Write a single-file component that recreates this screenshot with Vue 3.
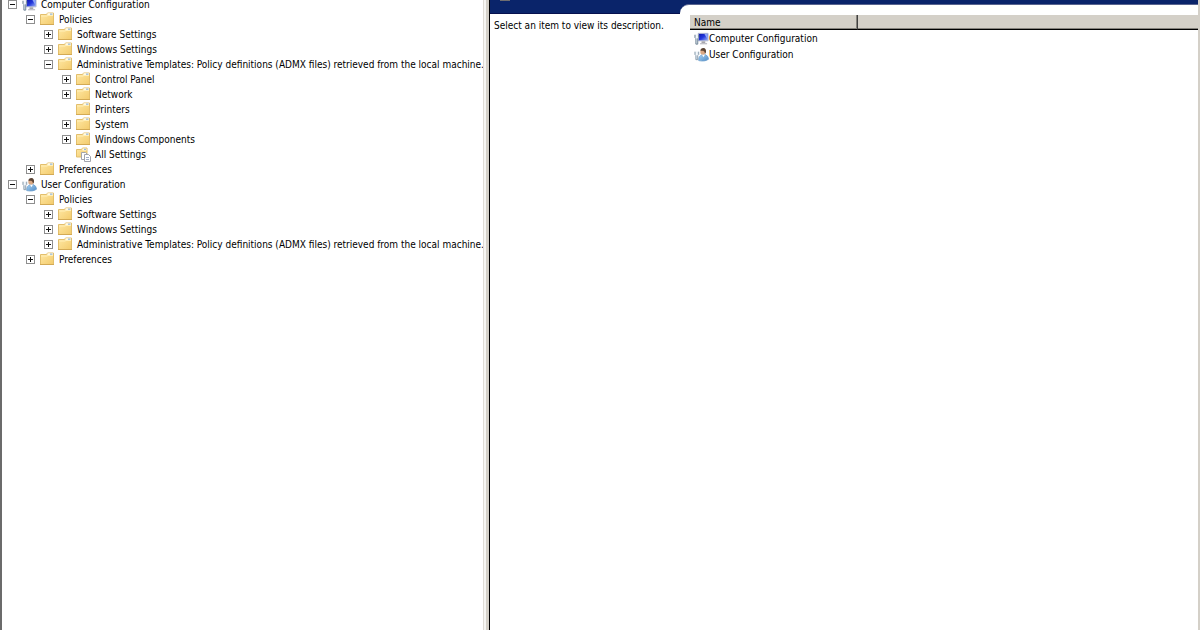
<script setup>
import { ref, computed } from 'vue'

const admx = 'Administrative Templates: Policy definitions (ADMX files) retrieved from the local machine.'

const nodes = ref([
  { label: 'Computer Configuration', depth: 0, icon: 'computer', open: true },
  { label: 'Policies', depth: 1, icon: 'folder', open: true },
  { label: 'Software Settings', depth: 2, icon: 'folder', open: false },
  { label: 'Windows Settings', depth: 2, icon: 'folder', open: false },
  { label: admx, depth: 2, icon: 'folder', open: true },
  { label: 'Control Panel', depth: 3, icon: 'folder', open: false },
  { label: 'Network', depth: 3, icon: 'folder', open: false },
  { label: 'Printers', depth: 3, icon: 'folder', leaf: true },
  { label: 'System', depth: 3, icon: 'folder', open: false },
  { label: 'Windows Components', depth: 3, icon: 'folder', open: false },
  { label: 'All Settings', depth: 3, icon: 'settings', leaf: true },
  { label: 'Preferences', depth: 1, icon: 'folder', open: false },
  { label: 'User Configuration', depth: 0, icon: 'user', open: true },
  { label: 'Policies', depth: 1, icon: 'folder', open: true },
  { label: 'Software Settings', depth: 2, icon: 'folder', open: false },
  { label: 'Windows Settings', depth: 2, icon: 'folder', open: false },
  { label: admx, depth: 2, icon: 'folder', open: false },
  { label: 'Preferences', depth: 1, icon: 'folder', open: false },
])

const visible = computed(() => {
  const out = []
  let limit = Infinity
  for (const n of nodes.value) {
    if (n.depth > limit) continue
    limit = n.leaf || n.open ? Infinity : n.depth
    out.push(n)
  }
  return out
})

const items = [
  { label: 'Computer Configuration', icon: 'computer' },
  { label: 'User Configuration', icon: 'user' },
]
</script>

<template>
  <svg class="defs" aria-hidden="true">
    <defs>
      <linearGradient id="fold" x1="0" y1="0" x2="1" y2="1">
        <stop offset="0" stop-color="#ffe8a4" />
        <stop offset="1" stop-color="#f3cb6c" />
      </linearGradient>
      <linearGradient id="screen" x1="0" y1="0" x2="1" y2="1">
        <stop offset="0" stop-color="#0a12a8" />
        <stop offset="0.5" stop-color="#2338dc" />
        <stop offset="1" stop-color="#a9bdf8" />
      </linearGradient>
      <linearGradient id="shirt" x1="0" y1="0" x2="1" y2="1">
        <stop offset="0" stop-color="#a9d2f2" />
        <stop offset="1" stop-color="#4f8cc8" />
      </linearGradient>
    </defs>
    <symbol id="i-folder" viewBox="0 0 15 15">
      <path d="M.5 2.500h6l1-1.500h6v11.500H.5z" fill="url(#fold)" stroke="#e3bf6c" />
      <path d="M7.500 1.200h5.500v2.300H7.500z" fill="#fffae6" />
      <path d="M10 1.500h2.500v1.300H10z" fill="#9dbbd8" />
      <path d="M1 4h6l1-.5h5" fill="none" stroke="#ffefb8" />
      <path d="M0 12.500h14" stroke="#d3aa55" />
    </symbol>
    <symbol id="i-settings" viewBox="0 0 15 15">
      <path d="M.5 2.500h5l1-1.500h4.500v9H.5z" fill="url(#fold)" stroke="#e3bf6c" />
      <path d="M6.500 1.500h4v2h-4z" fill="#fffae6" />
      <path d="M8 1.700h2v1.300H8z" fill="#9dbbd8" />
      <path d="M5.500 5.500h4l1.500 1.500v5.500H5.500z" fill="#fff" stroke="#a2a5ad" />
      <path d="M8.500 7.500h4l2 2v5h-6z" fill="#fff" stroke="#a2a5ad" />
      <path d="M10 10.500h3M10 12.500h3" stroke="#a3b0c8" />
    </symbol>
    <symbol id="i-computer" viewBox="0 0 16 16">
      <path d="M4.500 2.500h10.500v8H4.500z" fill="url(#screen)" stroke="#b9bfd0" />
      <path d="M11 3l3.500 0v6z" fill="#8fa6f5" />
      <path d="M8 11h4v2H8z" fill="#a5a5ac" />
      <path d="M6.500 13.500h7.500" stroke="#c0c0c8" stroke-width="1.500" />
      <path d="M1 4v3l1 1v6h2V8l1-1V4" fill="#dce6ee" stroke="#6c7f91" />
      <path d="M3 4v4" stroke="#fff" />
    </symbol>
    <symbol id="i-user" viewBox="0 0 16 16">
      <path d="M5 14.500q-.5-5 4-6.500h3q3.500 1.500 3.500 5-4 3-10.500 1.500" fill="url(#shirt)" stroke="#6499c8" stroke-width=".7" />
      <path d="M8.500 8l1.500 3 1.800-3z" fill="#fff" />
      <circle cx="9.500" cy="5.200" r="2.800" fill="#dba984" />
      <path d="M6.800 4Q7 1 10 1q3.300.3 2.800 4.500l-1 1.700Q11.500 4.500 9.800 4z" fill="#5a4334" />
      <path d="M1 5v3l1 1v4.500h2V9l1-1V5" fill="#dce6ee" stroke="#8a9baa" />
      <path d="M3 5v4" stroke="#fff" />
    </symbol>
  </svg>

  <main class="console">
    <nav class="tree-pane" aria-label="Console tree">
      <ul class="tree">
        <li v-for="(n, i) in visible" :key="i" class="node" :style="{ paddingLeft: n.depth * 18 + 'px' }">
          <button
            v-if="!n.leaf"
            class="toggle"
            type="button"
            :aria-expanded="n.open"
            :aria-label="n.label"
            @click="n.open = !n.open"
          >
            <svg viewBox="0 0 9 9" width="9" height="9">
              <rect x=".5" y=".5" width="8" height="8" fill="#fff" stroke="#8e8e8e" />
              <path :d="n.open ? 'M2 4.500h5' : 'M2 4.500h5M4.500 2v5'" stroke="#111" />
            </svg>
          </button>
          <span v-else class="toggle"></span>
          <svg class="icon"><use :href="'#i-' + n.icon" /></svg>
          <span class="label">{{ n.label }}</span>
        </li>
      </ul>
    </nav>
    <div class="splitter"></div>
    <section class="detail">
      <div class="description">
        <header class="banner"><span class="banner-icon"></span></header>
        <p>Select an item to view its description.</p>
      </div>
      <div class="list-side">
        <div class="sheet">
          <table class="list">
            <thead>
              <tr><th class="name">Name</th><th></th></tr>
            </thead>
            <tbody>
              <tr v-for="it in items" :key="it.label">
                <td colspan="2">
                  <div class="item">
                    <svg class="icon"><use :href="'#i-' + it.icon" /></svg>
                    <span>{{ it.label }}</span>
                  </div>
                </td>
              </tr>
            </tbody>
          </table>
        </div>
      </div>
    </section>
  </main>
</template>

<style>
body {
  background: #fff;
  overflow: hidden;
}
</style>

<style scoped>
.defs {
  position: absolute;
  width: 0;
  height: 0;
}
.console {
  display: flex;
  height: 100vh;
  box-sizing: border-box;
  border-left: 2px solid #6b6b6b;
  border-right: 2px solid #d4d0c8;
  background: #fff;
  color: #000;
  font: 10px/15px "DejaVu Sans Condensed", Tahoma, sans-serif;
}
.tree-pane {
  flex: 0 0 481px;
  min-width: 0;
}
.tree {
  list-style: none;
  margin: -3px 0 0;
  padding: 0 0 0 6px;
}
.node {
  display: flex;
  align-items: center;
  height: 15px;
  white-space: nowrap;
}
.toggle {
  flex: none;
  width: 9px;
  height: 9px;
  margin: 0 5px 0 0;
  padding: 0;
  border: 0;
  background: none;
}
.toggle svg {
  display: block;
}
.icon {
  flex: none;
  width: 15px;
  height: 15px;
}
.label {
  margin-left: 4px;
}
.splitter {
  flex: none;
  width: 5px;
  border-left: 1px solid #dedbd5;
  border-right: 1px solid #000;
  background: linear-gradient(90deg, #f6f5f2 2px, #d4d0c8 2px);
}
.detail {
  flex: 1;
  display: flex;
  min-width: 0;
}
.description {
  flex: 0 0 190px;
}
.banner {
  height: 13px;
  padding-left: 10px;
  background: #0a246a;
  border-bottom: 1px solid #06104e;
}
.banner-icon {
  display: block;
  width: 10px;
  height: 1px;
  background: #6f6d70;
}
.description p {
  margin: 4px 0 0 4px;
  white-space: nowrap;
}
.list-side {
  flex: 1;
  min-width: 0;
  background: linear-gradient(#0a246a 14px, #fff 14px);
}
.sheet {
  margin-top: 4px;
  padding: 10px 0 0 10px;
  border-top: 1px solid #59648f;
  border-top-left-radius: 9px;
  background: #fff;
}
.list {
  width: 100%;
  border-collapse: separate;
  border-spacing: 0;
  table-layout: fixed;
}
.list th {
  height: 13px;
  padding: 1px 0 0 4px;
  line-height: 13px;
  background: #d4d0c8;
  border-bottom: 1px solid #000;
  box-shadow: inset 0 -1px #85827c;
  font-weight: normal;
  text-align: left;
}
.list .name {
  width: 163px;
  border-right: 1px solid #404040;
  box-shadow: inset -1px -1px #85827c;
}
.list td {
  padding: 0;
}
.item {
  display: flex;
  align-items: center;
  height: 16px;
  padding-left: 4px;
}
</style>
